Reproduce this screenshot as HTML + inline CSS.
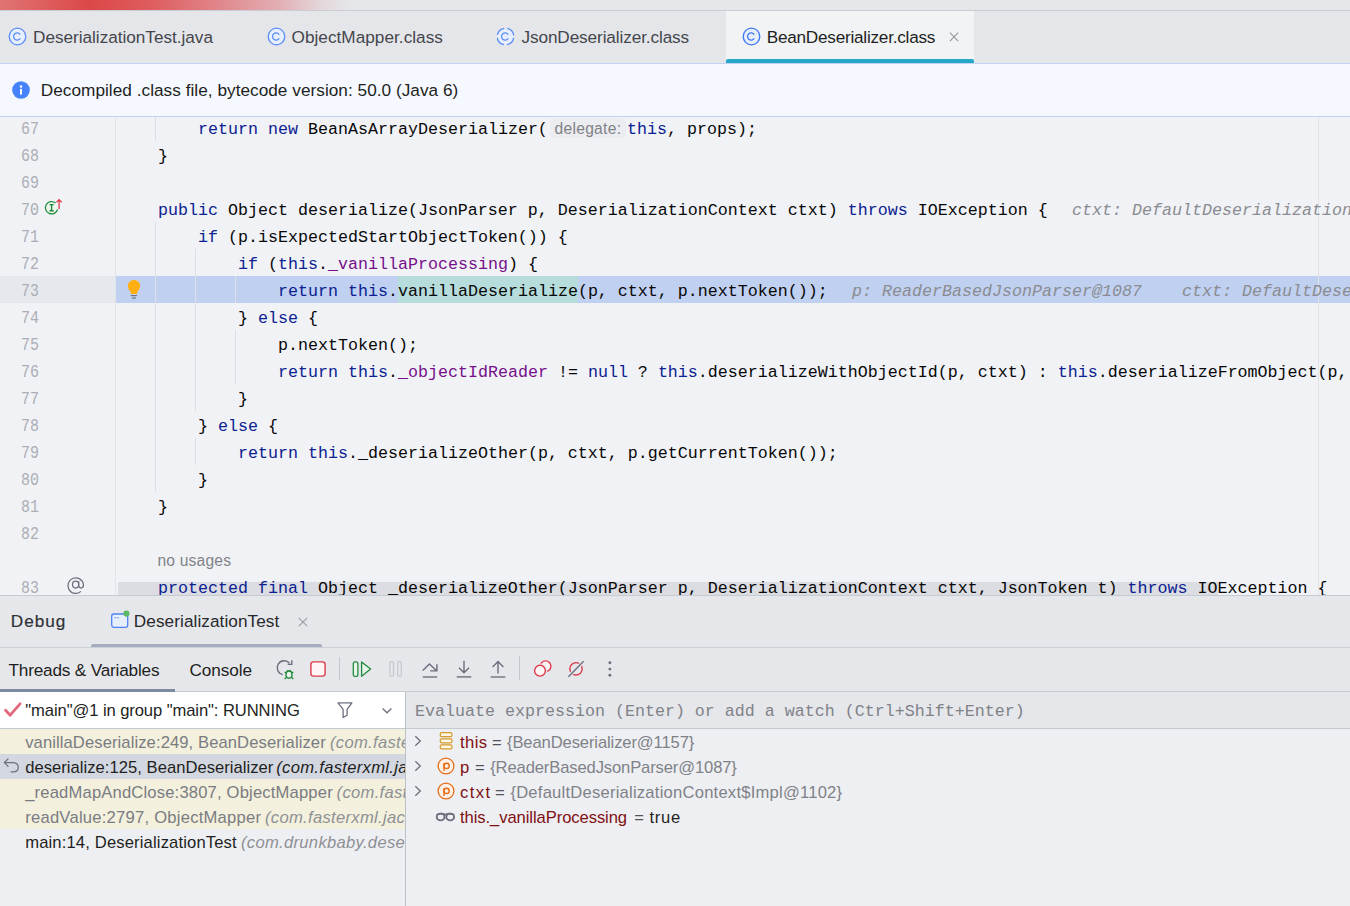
<!DOCTYPE html>
<html><head><meta charset="utf-8"><style>
*{margin:0;padding:0;box-sizing:border-box}
html,body{width:1350px;height:906px;overflow:hidden;background:#F2F3F5;font-family:"Liberation Sans",sans-serif}
.a{position:absolute;white-space:pre}
svg.a{overflow:visible}
.k{color:#0B2290}
.f{color:#76108A}
</style></head><body>
<div class="a" style="left:0px;top:0px;width:1350px;height:10px;background:linear-gradient(90deg,#E07474 0px,#DC4848 89px,#DE5C5E 150px,#E08488 215px,#E2B0B5 280px,#E4D6DA 320px,#E5E6EA 350px);"></div>
<div class="a" style="left:0px;top:10px;width:1350px;height:1px;background:#C9CCD4;"></div>
<div class="a" style="left:0px;top:11px;width:1350px;height:52px;background:#E5E6EA;"></div>
<div class="a" style="left:726px;top:11px;width:248px;height:52px;background:#F2F3F5;"></div>
<div class="a" style="left:726px;top:59px;width:248px;height:4px;background:#27A7C8;border-radius:2px 2px 0 0"></div>
<svg class="a" style="left:8.0px;top:27.1px;" width="19" height="19" viewBox="0 0 19 19"><circle cx="9.5" cy="9.5" r="8.3" fill="#E7EEFD" stroke="#5B8EF5" stroke-width="1.3"/><path d="M12.2 7.6 A3.6 3.6 0 1 0 12.2 11.4" fill="none" stroke="#5B8EF5" stroke-width="1.3" stroke-linecap="butt"/></svg>
<div class="a" style="left:33px;top:28.43px;font-family:'Liberation Sans',sans-serif;font-size:17.2px;line-height:19.21px;color:#44464C;letter-spacing:-0.024px;">DeserializationTest.java</div>
<svg class="a" style="left:267.0px;top:27.1px;" width="19" height="19" viewBox="0 0 19 19"><circle cx="9.5" cy="9.5" r="8.3" fill="#E7EEFD" stroke="#5B8EF5" stroke-width="1.3"/><path d="M12.2 7.6 A3.6 3.6 0 1 0 12.2 11.4" fill="none" stroke="#5B8EF5" stroke-width="1.3" stroke-linecap="butt"/></svg>
<div class="a" style="left:291.5px;top:28.43px;font-family:'Liberation Sans',sans-serif;font-size:17.2px;line-height:19.21px;color:#44464C;letter-spacing:0.027px;">ObjectMapper.class</div>
<svg class="a" style="left:495.8px;top:27.1px;" width="19" height="19" viewBox="0 0 19 19"><circle cx="9.5" cy="9.5" r="8.3" fill="#E7EEFD" stroke="#5B8EF5" stroke-width="1.3" stroke-dasharray="10 3.04" stroke-dashoffset="-1.52"/><path d="M12.2 7.6 A3.6 3.6 0 1 0 12.2 11.4" fill="none" stroke="#5B8EF5" stroke-width="1.3" stroke-linecap="butt"/></svg>
<div class="a" style="left:521.5px;top:28.43px;font-family:'Liberation Sans',sans-serif;font-size:17.2px;line-height:19.21px;color:#44464C;letter-spacing:-0.111px;">JsonDeserializer.class</div>
<svg class="a" style="left:741.8px;top:27.1px;" width="19" height="19" viewBox="0 0 19 19"><circle cx="9.5" cy="9.5" r="8.3" fill="#E7EEFD" stroke="#3D77F3" stroke-width="1.3"/><path d="M12.2 7.6 A3.6 3.6 0 1 0 12.2 11.4" fill="none" stroke="#3D77F3" stroke-width="1.3" stroke-linecap="butt"/></svg>
<div class="a" style="left:766.7px;top:28.43px;font-family:'Liberation Sans',sans-serif;font-size:17.2px;line-height:19.21px;color:#1E1F22;letter-spacing:-0.246px;">BeanDeserializer.class</div>
<svg class="a" style="left:949px;top:32px;" width="10" height="10" viewBox="0 0 10 10"><path d="M0.9 0.7 L9.2 9.2 M9.2 0.7 L0.9 9.2" stroke="#94969C" stroke-width="1.1"/></svg>
<div class="a" style="left:0px;top:63px;width:1350px;height:1px;background:#C2D3F6;"></div>
<div class="a" style="left:0px;top:64px;width:1350px;height:52px;background:#F5F8FE;"></div>
<div class="a" style="left:0px;top:116px;width:1350px;height:1px;background:#C2D3F6;"></div>
<svg class="a" style="left:12px;top:81px;" width="18" height="18" viewBox="0 0 18 18"><circle cx="9" cy="9" r="8.8" fill="#4682FA"/><circle cx="9" cy="5.4" r="1.25" fill="#fff"/><rect x="8" y="7.9" width="2" height="5.6" fill="#fff"/></svg>
<div class="a" style="left:40.8px;top:81.13px;font-family:'Liberation Sans',sans-serif;font-size:17.2px;line-height:19.21px;color:#1E1F22;letter-spacing:0.036px;">Decompiled .class file, bytecode version: 50.0 (Java 6)</div>
<div class="a" style="left:0;top:117px;width:1350px;height:478px;overflow:hidden;background:#F1F2F6">
<div class="a" style="left:0px;top:159px;width:115px;height:27px;background:#E5E8EC;"></div>
<div class="a" style="left:116px;top:159px;width:1234px;height:27px;background:#C0D0F0;"></div>
<div class="a" style="left:118px;top:465px;width:1100px;height:20px;background:#DCDDE2;"></div>
<div class="a" style="left:115px;top:0px;width:1px;height:478px;background:#E3E4E7;"></div>
<div class="a" style="left:1318px;top:0px;width:1px;height:478px;background:#E0E2E6;"></div>
<div class="a" style="left:155px;top:-3px;width:1px;height:27px;background:#DDDFE4;"></div>
<div class="a" style="left:155px;top:105px;width:1px;height:270px;background:#DDDFE4;"></div>
<div class="a" style="left:195px;top:132px;width:1px;height:162px;background:#DDDFE4;"></div>
<div class="a" style="left:195px;top:321px;width:1px;height:27px;background:#DDDFE4;"></div>
<div class="a" style="left:235px;top:159px;width:1px;height:27px;background:#DDDFE4;"></div>
<div class="a" style="left:235px;top:213px;width:1px;height:54px;background:#DDDFE4;"></div>
<div class="a" style="left:398px;top:159px;width:180px;height:27px;background:#B6DCDC;"></div>
<div class="a" style="left:17px;top:1.74px;font-family:'Liberation Mono',monospace;font-size:18.2px;line-height:20.62px;color:#ABAEB5;width:22px;text-align:right;transform:scaleX(0.82);transform-origin:100% 50%;">67</div>
<div class="a" style="left:17px;top:28.74px;font-family:'Liberation Mono',monospace;font-size:18.2px;line-height:20.62px;color:#ABAEB5;width:22px;text-align:right;transform:scaleX(0.82);transform-origin:100% 50%;">68</div>
<div class="a" style="left:17px;top:55.74px;font-family:'Liberation Mono',monospace;font-size:18.2px;line-height:20.62px;color:#ABAEB5;width:22px;text-align:right;transform:scaleX(0.82);transform-origin:100% 50%;">69</div>
<div class="a" style="left:17px;top:82.74px;font-family:'Liberation Mono',monospace;font-size:18.2px;line-height:20.62px;color:#ABAEB5;width:22px;text-align:right;transform:scaleX(0.82);transform-origin:100% 50%;">70</div>
<div class="a" style="left:17px;top:109.74px;font-family:'Liberation Mono',monospace;font-size:18.2px;line-height:20.62px;color:#ABAEB5;width:22px;text-align:right;transform:scaleX(0.82);transform-origin:100% 50%;">71</div>
<div class="a" style="left:17px;top:136.74px;font-family:'Liberation Mono',monospace;font-size:18.2px;line-height:20.62px;color:#ABAEB5;width:22px;text-align:right;transform:scaleX(0.82);transform-origin:100% 50%;">72</div>
<div class="a" style="left:17px;top:163.74px;font-family:'Liberation Mono',monospace;font-size:18.2px;line-height:20.62px;color:#ABAEB5;width:22px;text-align:right;transform:scaleX(0.82);transform-origin:100% 50%;">73</div>
<div class="a" style="left:17px;top:190.74px;font-family:'Liberation Mono',monospace;font-size:18.2px;line-height:20.62px;color:#ABAEB5;width:22px;text-align:right;transform:scaleX(0.82);transform-origin:100% 50%;">74</div>
<div class="a" style="left:17px;top:217.74px;font-family:'Liberation Mono',monospace;font-size:18.2px;line-height:20.62px;color:#ABAEB5;width:22px;text-align:right;transform:scaleX(0.82);transform-origin:100% 50%;">75</div>
<div class="a" style="left:17px;top:244.74px;font-family:'Liberation Mono',monospace;font-size:18.2px;line-height:20.62px;color:#ABAEB5;width:22px;text-align:right;transform:scaleX(0.82);transform-origin:100% 50%;">76</div>
<div class="a" style="left:17px;top:271.74px;font-family:'Liberation Mono',monospace;font-size:18.2px;line-height:20.62px;color:#ABAEB5;width:22px;text-align:right;transform:scaleX(0.82);transform-origin:100% 50%;">77</div>
<div class="a" style="left:17px;top:298.74px;font-family:'Liberation Mono',monospace;font-size:18.2px;line-height:20.62px;color:#ABAEB5;width:22px;text-align:right;transform:scaleX(0.82);transform-origin:100% 50%;">78</div>
<div class="a" style="left:17px;top:325.74px;font-family:'Liberation Mono',monospace;font-size:18.2px;line-height:20.62px;color:#ABAEB5;width:22px;text-align:right;transform:scaleX(0.82);transform-origin:100% 50%;">79</div>
<div class="a" style="left:17px;top:352.74px;font-family:'Liberation Mono',monospace;font-size:18.2px;line-height:20.62px;color:#ABAEB5;width:22px;text-align:right;transform:scaleX(0.82);transform-origin:100% 50%;">80</div>
<div class="a" style="left:17px;top:379.74px;font-family:'Liberation Mono',monospace;font-size:18.2px;line-height:20.62px;color:#ABAEB5;width:22px;text-align:right;transform:scaleX(0.82);transform-origin:100% 50%;">81</div>
<div class="a" style="left:17px;top:406.74px;font-family:'Liberation Mono',monospace;font-size:18.2px;line-height:20.62px;color:#ABAEB5;width:22px;text-align:right;transform:scaleX(0.82);transform-origin:100% 50%;">82</div>
<div class="a" style="left:17px;top:460.74px;font-family:'Liberation Mono',monospace;font-size:18.2px;line-height:20.62px;color:#ABAEB5;width:22px;text-align:right;transform:scaleX(0.82);transform-origin:100% 50%;">83</div>
<div class="a" style="left:198.0px;top:4.11px;font-family:'Liberation Mono',monospace;font-size:16.67px;line-height:18.89px;color:#080808;"><span class="k">return</span> <span class="k">new</span> BeanAsArrayDeserializer(</div>
<div class="a" style="left:550px;top:0.5px;width:76px;height:20.5px;background:#ECEDF0;border-radius:4px"></div>
<div class="a" style="left:554.5px;top:3.38px;font-family:'Liberation Sans',sans-serif;font-size:15.6px;line-height:17.43px;color:#808287;letter-spacing:0.291px;">delegate:</div>
<div class="a" style="left:627px;top:4.11px;font-family:'Liberation Mono',monospace;font-size:16.67px;line-height:18.89px;color:#080808;"><span class="k">this</span>, props);</div>
<div class="a" style="left:158.0px;top:31.11px;font-family:'Liberation Mono',monospace;font-size:16.67px;line-height:18.89px;color:#080808;">}</div>
<div class="a" style="left:158.0px;top:58.11px;font-family:'Liberation Mono',monospace;font-size:16.67px;line-height:18.89px;color:#080808;"></div>
<div class="a" style="left:158.0px;top:85.11px;font-family:'Liberation Mono',monospace;font-size:16.67px;line-height:18.89px;color:#080808;"><span class="k">public</span> Object deserialize(JsonParser p, DeserializationContext ctxt) <span class="k">throws</span> IOException {</div>
<div class="a" style="left:198.0px;top:112.11px;font-family:'Liberation Mono',monospace;font-size:16.67px;line-height:18.89px;color:#080808;"><span class="k">if</span> (p.isExpectedStartObjectToken()) {</div>
<div class="a" style="left:238.0px;top:139.11px;font-family:'Liberation Mono',monospace;font-size:16.67px;line-height:18.89px;color:#080808;"><span class="k">if</span> (<span class="k">this</span>.<span class="f">_vanillaProcessing</span>) {</div>
<div class="a" style="left:278.0px;top:166.11px;font-family:'Liberation Mono',monospace;font-size:16.67px;line-height:18.89px;color:#080808;"><span class="k">return</span> <span class="k">this</span>.vanillaDeserialize(p, ctxt, p.nextToken());</div>
<div class="a" style="left:238.0px;top:193.11px;font-family:'Liberation Mono',monospace;font-size:16.67px;line-height:18.89px;color:#080808;">} <span class="k">else</span> {</div>
<div class="a" style="left:278.0px;top:220.11px;font-family:'Liberation Mono',monospace;font-size:16.67px;line-height:18.89px;color:#080808;">p.nextToken();</div>
<div class="a" style="left:278.0px;top:247.11px;font-family:'Liberation Mono',monospace;font-size:16.67px;line-height:18.89px;color:#080808;"><span class="k">return</span> <span class="k">this</span>.<span class="f">_objectIdReader</span> != <span class="k">null</span> ? <span class="k">this</span>.deserializeWithObjectId(p, ctxt) : <span class="k">this</span>.deserializeFromObject(p, ctxt);</div>
<div class="a" style="left:238.0px;top:274.11px;font-family:'Liberation Mono',monospace;font-size:16.67px;line-height:18.89px;color:#080808;">}</div>
<div class="a" style="left:198.0px;top:301.11px;font-family:'Liberation Mono',monospace;font-size:16.67px;line-height:18.89px;color:#080808;">} <span class="k">else</span> {</div>
<div class="a" style="left:238.0px;top:328.11px;font-family:'Liberation Mono',monospace;font-size:16.67px;line-height:18.89px;color:#080808;"><span class="k">return</span> <span class="k">this</span>._deserializeOther(p, ctxt, p.getCurrentToken());</div>
<div class="a" style="left:198.0px;top:355.11px;font-family:'Liberation Mono',monospace;font-size:16.67px;line-height:18.89px;color:#080808;">}</div>
<div class="a" style="left:158.0px;top:382.11px;font-family:'Liberation Mono',monospace;font-size:16.67px;line-height:18.89px;color:#080808;">}</div>
<div class="a" style="left:158.0px;top:409.11px;font-family:'Liberation Mono',monospace;font-size:16.67px;line-height:18.89px;color:#080808;"></div>
<div class="a" style="left:158.0px;top:463.11px;font-family:'Liberation Mono',monospace;font-size:16.67px;line-height:18.89px;color:#080808;"><span class="k">protected</span> <span class="k">final</span> Object _deserializeOther(JsonParser p, DeserializationContext ctxt, JsonToken t) <span class="k">throws</span> IOException {</div>
<div class="a" style="left:1072px;top:85.11px;font-family:'Liberation Mono',monospace;font-size:16.67px;line-height:18.89px;color:#8A8C91;font-style:italic;">ctxt: DefaultDeserializationContext$Impl@1102</div>
<div class="a" style="left:852px;top:166.11px;font-family:'Liberation Mono',monospace;font-size:16.67px;line-height:18.89px;color:#8A8C91;font-style:italic;">p: ReaderBasedJsonParser@1087</div>
<div class="a" style="left:1182px;top:166.11px;font-family:'Liberation Mono',monospace;font-size:16.67px;line-height:18.89px;color:#8A8C91;font-style:italic;">ctxt: DefaultDeserializationContext$Impl@1102</div>
<div class="a" style="left:157.5px;top:435.38px;font-family:'Liberation Sans',sans-serif;font-size:15.6px;line-height:17.43px;color:#818388;letter-spacing:0.191px;">no usages</div>
<svg class="a" style="left:44px;top:83px;" width="22" height="18" viewBox="0 0 22 18"><circle cx="7.6" cy="7.7" r="6.2" fill="#EEF7EE"/><path d="M11.6 3 A6.2 6.2 0 1 0 13.6 9.3" fill="none" stroke="#208A3C" stroke-width="1.3"/><path d="M5.5 4.6 H9.7 M5.5 10.8 H9.7 M7.6 4.6 V10.8" stroke="#208A3C" stroke-width="1.4"/><path d="M15.1 9 V-0.6 M12.5 2.2 L15.1 -0.4 L17.7 2.2" fill="none" stroke="#DB3B4B" stroke-width="1.3"/></svg>
<svg class="a" style="left:126px;top:162px;" width="16" height="21" viewBox="0 0 16 21"><path d="M8 1.1 C4.6 1.1 1.9 3.8 1.9 7.2 C1.9 9.5 3.2 11.2 4.4 12.3 C4.6 13 4.7 14 4.7 14.9 H11.2 C11.2 14 11.3 13 11.5 12.3 C12.8 11.2 14.1 9.5 14.1 7.2 C14.1 3.8 11.4 1.1 8 1.1 Z" fill="#FFAF0F"/><path d="M4.9 16.6 H11" stroke="#6C707E" stroke-width="1.1"/><path d="M5.9 19 H10" stroke="#6C707E" stroke-width="1.5" opacity="0.75"/></svg>
<svg class="a" style="left:66px;top:458px;" width="19" height="19" viewBox="0 0 19 19"><ellipse cx="9.6" cy="9.6" rx="3.1" ry="3.4" fill="none" stroke="#6C707E" stroke-width="1.25"/><path d="M14.9 16.4 A7.8 7.8 0 1 1 17.4 9.4 V10.6 C17.4 12.2 16.4 13 15.1 13 C13.8 13 12.7 12.2 12.7 10.6 V6.3" fill="none" stroke="#6C707E" stroke-width="1.25"/></svg>
</div>
<div class="a" style="left:0px;top:595px;width:1350px;height:1px;background:#C5CBD3;"></div>
<div class="a" style="left:0px;top:596px;width:1350px;height:310px;background:#EEEFF3;"></div>
<div class="a" style="left:0px;top:596px;width:1350px;height:96px;background:#E6E7EB;"></div>
<div class="a" style="left:10.8px;top:612.43px;font-family:'Liberation Sans',sans-serif;font-size:17.2px;line-height:19.21px;color:#303136;-webkit-text-stroke:0.2px #303136;letter-spacing:0.961px;">Debug</div>
<svg class="a" style="left:110px;top:611.3px;" width="22" height="18" viewBox="0 0 22 18"><rect x="1.7" y="3" width="16" height="13.3" rx="2.2" fill="#E7EEFD" stroke="#4D83F4" stroke-width="1.3"/><path d="M4.5 6.7 H6 M7.3 6.7 H8.8" stroke="#4D83F4" stroke-width="1.1"/><circle cx="16.4" cy="2.6" r="3.1" fill="#5FB865"/></svg>
<div class="a" style="left:133.8px;top:612.43px;font-family:'Liberation Sans',sans-serif;font-size:17.2px;line-height:19.21px;color:#27282C;letter-spacing:0.069px;">DeserializationTest</div>
<svg class="a" style="left:298px;top:617px;" width="10" height="10" viewBox="0 0 10 10"><path d="M0.8 0.8 L9.2 9.2 M9.2 0.8 L0.8 9.2" stroke="#9A9CA2" stroke-width="1.1"/></svg>
<div class="a" style="left:91px;top:644px;width:231px;height:4px;background:#A6AEBD;border-radius:2px 2px 0 0"></div>
<div class="a" style="left:0px;top:647px;width:1350px;height:1px;background:#CBD0D7;"></div>
<div class="a" style="left:8.5px;top:661.03px;font-family:'Liberation Sans',sans-serif;font-size:17.2px;line-height:19.21px;color:#1E1F22;letter-spacing:-0.192px;">Threads &amp; Variables</div>
<div class="a" style="left:189.5px;top:661.03px;font-family:'Liberation Sans',sans-serif;font-size:17.2px;line-height:19.21px;color:#1E1F22;letter-spacing:-0.094px;">Console</div>
<div class="a" style="left:0px;top:691px;width:1350px;height:1px;background:#C3CAD2;"></div>
<div class="a" style="left:0px;top:689px;width:175px;height:3px;background:#7D899E;"></div>
<svg class="a" style="left:274px;top:658px;" width="24" height="24" viewBox="0 0 24 24"><path d="M15.5 5.2 A7 7 0 1 0 8.7 16.6" fill="none" stroke="#6C707E" stroke-width="1.4"/><path d="M17.8 2.3 V6.4 H13.7" fill="none" stroke="#6C707E" stroke-width="1.4"/><ellipse cx="15" cy="16.6" rx="3" ry="3.6" fill="#E9F5EA" stroke="#208A3C" stroke-width="1.4"/><path d="M10.6 14 L12.3 14.8 M19.4 14 L17.7 14.8 M10.6 21 L12.3 19.6 M19.4 21 L17.7 19.6 M13.5 12.2 L14.3 13.3 M16.5 12.2 L15.7 13.3" stroke="#208A3C" stroke-width="1.3"/></svg>
<svg class="a" style="left:309px;top:660px;" width="18" height="18" viewBox="0 0 18 18"><rect x="1.9" y="1.9" width="14.2" height="14.2" rx="2.6" fill="#FFF5F5" stroke="#DB3B4B" stroke-width="1.4"/></svg>
<div class="a" style="left:339px;top:657px;width:1px;height:23px;background:#C3C7D0;"></div>
<svg class="a" style="left:351px;top:659px;" width="24" height="20" viewBox="0 0 24 20"><rect x="2.3" y="2.9" width="4.6" height="14.4" rx="1.6" fill="#E9F5EA" stroke="#208A3C" stroke-width="1.3"/><path d="M10.6 3 L19.6 10.1 L10.6 17.2 Z" fill="#E9F5EA" stroke="#208A3C" stroke-width="1.3" stroke-linejoin="round"/></svg>
<svg class="a" style="left:388px;top:660px;" width="16" height="18" viewBox="0 0 16 18"><rect x="1.9" y="1.7" width="3.6" height="14.4" rx="1.2" fill="none" stroke="#C5C7CC" stroke-width="1.2"/><rect x="9.7" y="1.7" width="3.6" height="14.4" rx="1.2" fill="none" stroke="#C5C7CC" stroke-width="1.2"/></svg>
<svg class="a" style="left:420px;top:659px;" width="20" height="20" viewBox="0 0 20 20"><path d="M2.8 11.6 L9.4 4.9 L16.4 11.4 M16.9 5.3 V11.9 H10.2" fill="none" stroke="#6C707E" stroke-width="1.4"/><path d="M2.8 18 H17.2" stroke="#6C707E" stroke-width="1.4"/></svg>
<svg class="a" style="left:454px;top:659px;" width="20" height="20" viewBox="0 0 20 20"><path d="M10 1.8 V13.3 M5 8.8 L10 13.7 L15 8.8" fill="none" stroke="#6C707E" stroke-width="1.4"/><path d="M2.7 17.9 H17.3" stroke="#6C707E" stroke-width="1.4"/></svg>
<svg class="a" style="left:488px;top:659px;" width="20" height="20" viewBox="0 0 20 20"><path d="M10 14.5 V2.7 M4.6 7.9 L10 2.6 L15.4 7.9" fill="none" stroke="#6C707E" stroke-width="1.4"/><path d="M2.7 18 H17.3" stroke="#6C707E" stroke-width="1.4"/></svg>
<div class="a" style="left:519px;top:656px;width:1px;height:24px;background:#C3C7D0;"></div>
<svg class="a" style="left:532px;top:658px;" width="22" height="22" viewBox="0 0 22 22"><circle cx="13.6" cy="8.2" r="5.3" fill="#FFF5F5" stroke="#DB3B4B" stroke-width="1.4"/><circle cx="8" cy="12.7" r="5.4" fill="#FFF5F5" stroke="#E6E7EB" stroke-width="3.6"/><circle cx="8" cy="12.7" r="5.4" fill="#FFF5F5" stroke="#DB3B4B" stroke-width="1.4"/></svg>
<svg class="a" style="left:566px;top:659px;" width="20" height="20" viewBox="0 0 20 20"><circle cx="10" cy="9.8" r="6.2" fill="none" stroke="#DB3B4B" stroke-width="1.4"/><path d="M2.5 17.6 L17.5 2.4" stroke="#E6E7EB" stroke-width="3.5"/><path d="M2.4 17.7 L17.6 2.3" stroke="#6C707E" stroke-width="1.4"/></svg>
<svg class="a" style="left:606px;top:659px;" width="8" height="20" viewBox="0 0 8 20"><circle cx="3.9" cy="3.7" r="1.45" fill="#6C707E"/><circle cx="3.9" cy="10.1" r="1.45" fill="#6C707E"/><circle cx="3.9" cy="16.3" r="1.45" fill="#6C707E"/></svg>
<div class="a" style="left:0px;top:692px;width:405px;height:36px;background:#FFFFFF;"></div>
<div class="a" style="left:406px;top:692px;width:944px;height:36px;background:#E6E7EB;"></div>
<svg class="a" style="left:3px;top:701px;" width="20" height="18" viewBox="0 0 20 18"><path d="M2.5 9.2 L7.2 14.2 L17 2.8" fill="none" stroke="#E2687C" stroke-width="2.8" stroke-linecap="round" stroke-linejoin="round"/></svg>
<div class="a" style="left:25.3px;top:701.98px;font-family:'Liberation Sans',sans-serif;font-size:16.6px;line-height:18.54px;color:#1E1F22;letter-spacing:-0.091px;">"main"@1 in group "main": RUNNING</div>
<svg class="a" style="left:335px;top:700px;" width="20" height="20" viewBox="0 0 20 20"><path d="M3 2.9 H16.9 L12.1 9.4 V15.2 L8.1 17.5 V9.4 Z" fill="none" stroke="#6C707E" stroke-width="1.3" stroke-linejoin="round"/></svg>
<svg class="a" style="left:378px;top:704px;" width="16" height="12" viewBox="0 0 16 12"><path d="M4.6 4.5 L9 8.8 L13.4 4.5" fill="none" stroke="#6C707E" stroke-width="1.3"/></svg>
<div class="a" style="left:415px;top:703.11px;font-family:'Liberation Mono',monospace;font-size:16.67px;line-height:18.89px;color:#808287;">Evaluate expression (Enter) or add a watch (Ctrl+Shift+Enter)</div>
<div class="a" style="left:0px;top:728px;width:1350px;height:1px;background:#C3CAD2;"></div>
<div class="a" style="left:405px;top:692px;width:1px;height:214px;background:#BAC1CB;"></div>
<div class="a" style="left:0;top:729px;width:405px;height:177px;overflow:hidden">
<div class="a" style="left:0px;top:0px;width:405px;height:25px;background:#F3F0DD;"></div>
<div class="a" style="left:25.2px;top:5.28px;font-family:'Liberation Sans',sans-serif;font-size:16.6px;line-height:18.54px;color:#7A7C82;letter-spacing:0.090px;">vanillaDeserialize:249, BeanDeserializer</div>
<div class="a" style="left:330.0px;top:5.28px;font-family:'Liberation Sans',sans-serif;font-size:16.6px;line-height:18.54px;color:#8E9094;font-style:italic;letter-spacing:0.3px;">(com.fasterxml.jackson.databind.deser)</div>
<div class="a" style="left:0px;top:25px;width:405px;height:25px;background:#D3D7DF;"></div>
<div class="a" style="left:25.2px;top:30.28px;font-family:'Liberation Sans',sans-serif;font-size:16.6px;line-height:18.54px;color:#1E1F22;letter-spacing:0.031px;">deserialize:125, BeanDeserializer</div>
<div class="a" style="left:276.3px;top:30.28px;font-family:'Liberation Sans',sans-serif;font-size:16.6px;line-height:18.54px;color:#1E1F22;font-style:italic;letter-spacing:0.3px;">(com.fasterxml.jackson.databind.deser)</div>
<div class="a" style="left:0px;top:50px;width:405px;height:25px;background:#F3F0DD;"></div>
<div class="a" style="left:25.2px;top:55.28px;font-family:'Liberation Sans',sans-serif;font-size:16.6px;line-height:18.54px;color:#7A7C82;letter-spacing:0.172px;">_readMapAndClose:3807, ObjectMapper</div>
<div class="a" style="left:336.6px;top:55.28px;font-family:'Liberation Sans',sans-serif;font-size:16.6px;line-height:18.54px;color:#8E9094;font-style:italic;letter-spacing:0.3px;">(com.fasterxml.jackson.databind)</div>
<div class="a" style="left:0px;top:75px;width:405px;height:25px;background:#F3F0DD;"></div>
<div class="a" style="left:25.2px;top:80.28px;font-family:'Liberation Sans',sans-serif;font-size:16.6px;line-height:18.54px;color:#7A7C82;letter-spacing:0.237px;">readValue:2797, ObjectMapper</div>
<div class="a" style="left:265.0px;top:80.28px;font-family:'Liberation Sans',sans-serif;font-size:16.6px;line-height:18.54px;color:#8E9094;font-style:italic;letter-spacing:0.3px;">(com.fasterxml.jackson.databind)</div>
<div class="a" style="left:25.2px;top:105.28px;font-family:'Liberation Sans',sans-serif;font-size:16.6px;line-height:18.54px;color:#1E1F22;letter-spacing:0.147px;">main:14, DeserializationTest</div>
<div class="a" style="left:241.0px;top:105.28px;font-family:'Liberation Sans',sans-serif;font-size:16.6px;line-height:18.54px;color:#8E9094;font-style:italic;letter-spacing:0.3px;">(com.drunkbaby.deserialization)</div>
<svg class="a" style="left:1.5px;top:27.5px;" width="18" height="16" viewBox="0 0 18 16"><path d="M6.4 1.6 L2.4 5.6 L6.4 9.6 M2.6 5.6 H11 C14.1 5.6 16.2 7.6 16.2 10.4 C16.2 13.2 14.1 14.8 11 14.8 H8.6" fill="none" stroke="#6C707E" stroke-width="1.25"/></svg>
</div>
<svg class="a" style="left:413px;top:735px;" width="10" height="12" viewBox="0 0 10 12"><path d="M2.3 1.3 L7.3 6 L2.3 10.7" fill="none" stroke="#6C707E" stroke-width="1.3"/></svg>
<svg class="a" style="left:413px;top:760px;" width="10" height="12" viewBox="0 0 10 12"><path d="M2.3 1.3 L7.3 6 L2.3 10.7" fill="none" stroke="#6C707E" stroke-width="1.3"/></svg>
<svg class="a" style="left:413px;top:785px;" width="10" height="12" viewBox="0 0 10 12"><path d="M2.3 1.3 L7.3 6 L2.3 10.7" fill="none" stroke="#6C707E" stroke-width="1.3"/></svg>
<svg class="a" style="left:438px;top:731px;" width="16" height="20" viewBox="0 0 16 20"><rect x="2.3" y="1.7" width="11.6" height="4" rx="1.2" fill="#FDF6E3" stroke="#D49A2B" stroke-width="1.2"/><rect x="2.3" y="7.8" width="11.6" height="4" rx="1.2" fill="#FDF6E3" stroke="#D49A2B" stroke-width="1.2"/><rect x="2.3" y="13.9" width="11.6" height="4" rx="1.2" fill="#FDF6E3" stroke="#D49A2B" stroke-width="1.2"/></svg>
<svg class="a" style="left:436px;top:756px;" width="20" height="20" viewBox="0 0 20 20"><circle cx="10" cy="10" r="7.9" fill="#FDF0E6" stroke="#E66D17" stroke-width="1.3"/><path d="M8 7.3 V15" fill="none" stroke="#E66D17" stroke-width="1.4"/><ellipse cx="10.6" cy="9.9" rx="2.6" ry="2.6" fill="none" stroke="#E66D17" stroke-width="1.4"/></svg>
<svg class="a" style="left:436px;top:781px;" width="20" height="20" viewBox="0 0 20 20"><circle cx="10" cy="10" r="7.9" fill="#FDF0E6" stroke="#E66D17" stroke-width="1.3"/><path d="M8 7.3 V15" fill="none" stroke="#E66D17" stroke-width="1.4"/><ellipse cx="10.6" cy="9.9" rx="2.6" ry="2.6" fill="none" stroke="#E66D17" stroke-width="1.4"/></svg>
<svg class="a" style="left:435px;top:810px;" width="22" height="13" viewBox="0 0 22 13"><ellipse cx="5.6" cy="7" rx="3.9" ry="3.4" fill="none" stroke="#6C707E" stroke-width="1.9"/><ellipse cx="15.2" cy="7" rx="3.9" ry="3.4" fill="none" stroke="#6C707E" stroke-width="1.9"/><path d="M1.6 5 C4 3.2 7 3.2 10.4 4.6 C13.8 3.2 16.8 3.2 19.2 5" fill="none" stroke="#6C707E" stroke-width="1.9"/></svg>
<div class="a" style="left:460.0px;top:734.28px;font-family:'Liberation Sans',sans-serif;font-size:16.6px;line-height:18.54px;color:#7F1111;letter-spacing:0.424px;">this</div>
<div class="a" style="left:492.1px;top:734.28px;font-family:'Liberation Sans',sans-serif;font-size:16.6px;line-height:18.54px;color:#50535A;">=</div>
<div class="a" style="left:507.0px;top:734.28px;font-family:'Liberation Sans',sans-serif;font-size:16.6px;line-height:18.54px;color:#808287;letter-spacing:-0.122px;">{BeanDeserializer@1157}</div>
<div class="a" style="left:460.0px;top:759.28px;font-family:'Liberation Sans',sans-serif;font-size:16.6px;line-height:18.54px;color:#7F1111;letter-spacing:0.766px;">p</div>
<div class="a" style="left:475.1px;top:759.28px;font-family:'Liberation Sans',sans-serif;font-size:16.6px;line-height:18.54px;color:#50535A;">=</div>
<div class="a" style="left:490.2px;top:759.28px;font-family:'Liberation Sans',sans-serif;font-size:16.6px;line-height:18.54px;color:#808287;letter-spacing:-0.131px;">{ReaderBasedJsonParser@1087}</div>
<div class="a" style="left:460.0px;top:784.28px;font-family:'Liberation Sans',sans-serif;font-size:16.6px;line-height:18.54px;color:#7F1111;letter-spacing:1.391px;">ctxt</div>
<div class="a" style="left:495.1px;top:784.28px;font-family:'Liberation Sans',sans-serif;font-size:16.6px;line-height:18.54px;color:#50535A;">=</div>
<div class="a" style="left:510.4px;top:784.28px;font-family:'Liberation Sans',sans-serif;font-size:16.6px;line-height:18.54px;color:#808287;letter-spacing:0.223px;">{DefaultDeserializationContext$Impl@1102}</div>
<div class="a" style="left:460.0px;top:809.28px;font-family:'Liberation Sans',sans-serif;font-size:16.6px;line-height:18.54px;color:#7F1111;letter-spacing:-0.077px;">this._vanillaProcessing</div>
<div class="a" style="left:634.2px;top:809.28px;font-family:'Liberation Sans',sans-serif;font-size:16.6px;line-height:18.54px;color:#50535A;">=</div>
<div class="a" style="left:649.4px;top:809.28px;font-family:'Liberation Sans',sans-serif;font-size:16.6px;line-height:18.54px;color:#1E1F22;letter-spacing:0.735px;">true</div>
</body></html>
